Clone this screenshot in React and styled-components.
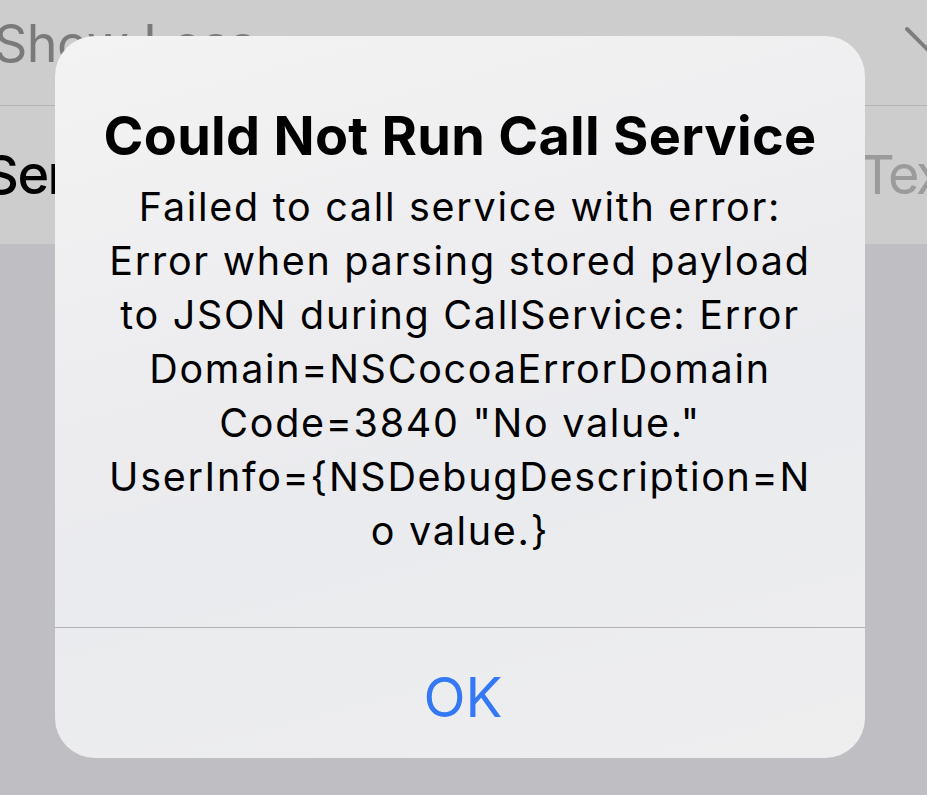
import React from "react";
import styled, { createGlobalStyle } from "styled-components";

const Global = createGlobalStyle`
  html, body { margin: 0; padding: 0; }
  body { font-family: Inter, "Noto Sans", sans-serif; }
`;

const Page = styled.div`
  position: relative;
  width: 927px;
  height: 795px;
  overflow: hidden;
  background: #bfbec3;
  font-family: Inter, "Noto Sans", sans-serif;
`;

const BackCard = styled.div`
  height: 244px;
  background: #cdcdcd;
  display: flex;
  flex-direction: column;
`;

const BackRow = styled.div`
  height: ${(p) => p.$h}px;
  display: flex;
  align-items: center;
  justify-content: space-between;
  border-bottom: ${(p) => (p.$divider ? "1px solid #b3b3b3" : "none")};
  box-sizing: border-box;
`;

const ShowLess = styled.span`
  font-size: 52px;
  color: #7a7a7a;
  margin-left: -6px;
  margin-top: -18px;
  letter-spacing: -0.5px;
`;

const Chevron = styled.svg`
  width: 50px;
  height: 32px;
  margin-right: -28px;
  margin-top: -22px;
`;

const Label = styled.span`
  font-size: 54px;
  font-weight: 500;
  color: #000;
  margin-left: -16px;
  margin-top: -2px;
  letter-spacing: -1.5px;
`;

const Placeholder = styled.span`
  font-size: 54px;
  color: #9b9b9b;
  margin-right: -32px;
  margin-top: -2px;
  letter-spacing: -2.5px;
`;

const Overlay = styled.div`
  position: absolute;
  inset: 0;
  display: flex;
  justify-content: flex-start;
  align-items: flex-start;
  padding: 36px 0 0 55px;
`;

const Alert = styled.div`
  width: 810px;
  height: 722px;
  border-radius: 40px;
  background: linear-gradient(165deg, #f3f3f3 0%, #ececef 45%, #eaebee 60%, #eeeeef 100%);
  display: flex;
  flex-direction: column;
  overflow: hidden;
`;

const Content = styled.div`
  flex: 1;
  display: flex;
  flex-direction: column;
  align-items: center;
  padding-top: 66px;
  text-align: center;
`;

const Title = styled.div`
  font-size: 54px;
  font-weight: 700;
  color: #000;
  line-height: 68px;
  letter-spacing: 0.3px;
`;

const Message = styled.div`
  font-size: 39.5px;
  color: #000;
  line-height: 54px;
  margin-top: 10px;
  letter-spacing: 1.7px;
`;

const Divider = styled.div`
  height: 1px;
  background: #b2b2b4;
`;

const Button = styled.div`
  height: 130px;
  display: flex;
  align-items: center;
  justify-content: center;
  font-size: 55px;
  color: #3478f6;
  padding: 8px 0 0 6px;
  box-sizing: border-box;
`;

export default function App() {
  return (
    <>
      <Global />
      <Page>
        <BackCard>
          <BackRow $h={106} $divider>
            <ShowLess>Show Less</ShowLess>
            <Chevron viewBox="0 0 50 32">
              <polyline
                points="2,3 25,26 48,3"
                fill="none"
                stroke="#7d7d7d"
                strokeWidth="4"
                strokeLinecap="round"
                strokeLinejoin="round"
              />
            </Chevron>
          </BackRow>
          <BackRow $h={138}>
            <Label>Service</Label>
            <Placeholder>Text</Placeholder>
          </BackRow>
        </BackCard>
        <Overlay>
          <Alert>
            <Content>
              <Title>Could Not Run Call Service</Title>
              <Message>
                Failed to call service with error:
                <br />
                Error when parsing stored payload
                <br />
                to JSON during CallService: Error
                <br />
                Domain=NSCocoaErrorDomain
                <br />
                Code=3840 "No value."
                <br />
                UserInfo={"{"}NSDebugDescription=N
                <br />
                o value.{"}"}
              </Message>
            </Content>
            <Divider />
            <Button>OK</Button>
          </Alert>
        </Overlay>
      </Page>
    </>
  );
}
